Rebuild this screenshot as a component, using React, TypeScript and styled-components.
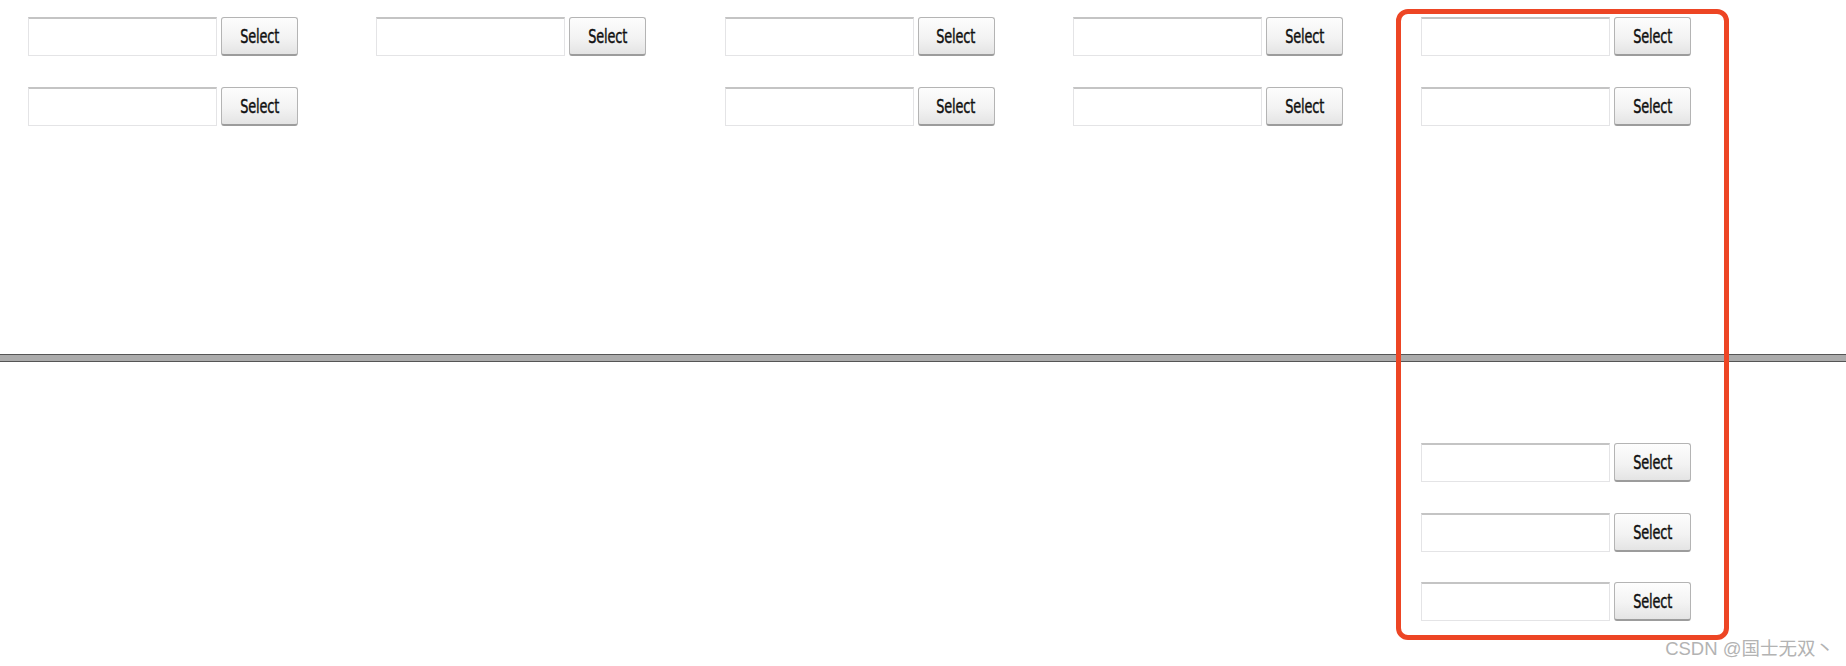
import React from "react";
import styled, { createGlobalStyle } from "styled-components";

const Global = createGlobalStyle`
  html, body { margin: 0; padding: 0; background: #ffffff; }
  body { font-family: "Liberation Sans", Arial, sans-serif; }
`;

const Page = styled.div`
  position: relative;
  width: 1846px;
  height: 666px;
  overflow: hidden;
  background: #ffffff;
  display: flex;
  flex-direction: column;
`;

const Pane = styled.div<{ $height?: number; $padTop: number }>`
  display: grid;
  grid-template-columns: repeat(5, 348.3px);
  align-items: start;
  padding: ${(p) => p.$padTop}px 0 0 28px;
  box-sizing: border-box;
  ${(p) => (p.$height ? `height: ${p.$height}px;` : "flex: 1;")}
`;

const Column = styled.div<{ $gap: number }>`
  display: flex;
  flex-direction: column;
  gap: ${(p) => p.$gap}px;
`;

const Field = styled.div`
  display: flex;
  align-items: center;
  gap: 4px;
  height: 39px;
`;

const TextInput = styled.input`
  box-sizing: border-box;
  width: 189px;
  height: 39px;
  margin: 0;
  padding: 0 4px;
  border: 1px solid #e4e4e6;
  border-top: 2px solid #c4c4c4;
  background: #ffffff;
  outline: none;
`;

const Button = styled.button`
  box-sizing: border-box;
  width: 77px;
  height: 39px;
  margin: 0;
  padding: 0;
  border: 1px solid #b4b4b4;
  border-bottom: 2px solid #9c9c9c;
  border-radius: 3px;
  background: linear-gradient(#fdfdfd, #f3f3f3 55%, #e4e4e4);
  display: flex;
  align-items: center;
  justify-content: center;
  cursor: pointer;
`;

const ButtonLabel = styled.span`
  display: inline-block;
  font-family: "DejaVu Sans", "Liberation Sans", sans-serif;
  font-size: 19px;
  color: #111111;
  -webkit-text-stroke: 0.45px #111111;
  transform: scaleX(0.68);
  letter-spacing: -0.2px;
  line-height: 1;
  margin-top: 1px;
`;

const Splitter = styled.div`
  box-sizing: border-box;
  height: 8px;
  flex: none;
  background: #ababab;
  border-top: 1px solid #555555;
  border-bottom: 1px solid #555555;
`;

const Highlight = styled.div`
  position: absolute;
  left: 1396px;
  top: 9px;
  width: 333px;
  height: 631px;
  box-sizing: border-box;
  border: 5px solid #ed4524;
  border-radius: 12px;
  pointer-events: none;
`;

const Watermark = styled.div`
  position: absolute;
  right: 12px;
  top: 634px;
  font-family: "Liberation Sans", "Noto Sans CJK SC", sans-serif;
  font-size: 18.5px;
  color: #b3b3b3;
  white-space: nowrap;
  text-shadow: 0 0 2px #ffffff;
`;

const SelectField: React.FC = () => (
  <Field>
    <TextInput type="text" />
    <Button type="button">
      <ButtonLabel>Select</ButtonLabel>
    </Button>
  </Field>
);

const topCounts = [2, 1, 2, 2, 2];
const bottomCounts = [0, 0, 0, 0, 3];

const renderColumns = (counts: number[], gap: number) =>
  counts.map((n, ci) => (
    <Column key={ci} $gap={gap}>
      {Array.from({ length: n }).map((_, i) => (
        <SelectField key={i} />
      ))}
    </Column>
  ));

export default function App() {
  return (
    <>
      <Global />
      <Page>
        <Pane $height={354} $padTop={17}>
          {renderColumns(topCounts, 31)}
        </Pane>
        <Splitter />
        <Pane $padTop={81}>{renderColumns(bottomCounts, 30.5)}</Pane>
        <Highlight />
        <Watermark>CSDN @国士无双丶</Watermark>
      </Page>
    </>
  );
}
